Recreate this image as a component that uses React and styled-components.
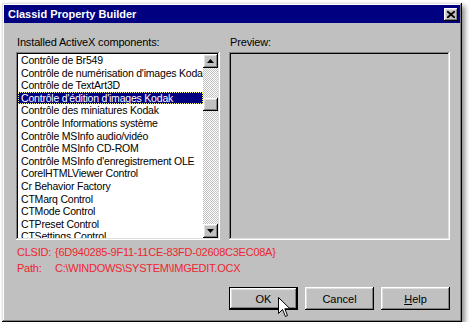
import React from 'react';
import styled, { createGlobalStyle } from 'styled-components';

const GlobalStyle = createGlobalStyle`
  body {
    margin: 0;
    background: #ffffff;
    font-family: "Liberation Sans", Arial, sans-serif;
    font-size: 11px;
  }
`;

const raised = `
  box-shadow: inset -1px -1px #000000, inset 1px 1px #ffffff,
    inset -2px -2px #808080, inset 2px 2px #dfdfdf;
`;
const sunken = `
  box-shadow: inset -1px -1px #ffffff, inset 1px 1px #808080,
    inset -2px -2px #dfdfdf, inset 2px 2px #000000;
`;

const Window = styled.div`
  position: relative;
  box-sizing: border-box;
  margin: 3px 0 0 2px;
  width: 460px;
  height: 319px;
  padding: 2px;
  background: #c0c0c0;
  display: flex;
  flex-direction: column;
  box-shadow: inset -1px -1px #000000, inset 1px 1px #dfdfdf,
    inset -2px -2px #808080, inset 2px 2px #ffffff,
    3px 3px 5px rgba(0, 0, 0, 0.45);
`;

const TitleBar = styled.div`
  height: 18px;
  background: #000080;
  color: #ffffff;
  display: flex;
  align-items: center;
  justify-content: space-between;
  padding: 0 2px 0 4px;
  font-weight: bold;
  font-size: 11px;
`;

const CloseButton = styled.div`
  width: 14px;
  height: 13px;
  background: #c0c0c0;
  ${raised}
  display: flex;
  align-items: center;
  justify-content: center;
`;

const Body = styled.div`
  flex: 1;
  padding: 13px 10px 0 12px;
  display: flex;
  flex-direction: column;
`;

const Panes = styled.div`
  display: grid;
  grid-template-columns: 204px 221px;
  grid-template-rows: 13px 188px;
  column-gap: 9px;
  row-gap: 3px;
`;

const Label = styled.div`
  line-height: 13px;
  color: #000000;
  padding-left: 1px;
  letter-spacing: -0.15px;
`;

const ListBox = styled.div`
  box-sizing: border-box;
  background: #ffffff;
  ${sunken}
  padding: 2px;
  display: flex;
  overflow: hidden;
`;

const Items = styled.div`
  flex: 1;
  overflow: hidden;
`;

const Item = styled.div`
  height: 12.6px;
  line-height: 12.6px;
  padding-left: 3px;
  font-size: 10.5px;
  letter-spacing: -0.2px;
  white-space: nowrap;
  overflow: hidden;
  color: ${(p) => (p.$selected ? '#ffffff' : '#000000')};
  background: ${(p) => (p.$selected ? '#000080' : 'transparent')};
  outline: ${(p) => (p.$selected ? '1px dotted #ffff80' : 'none')};
  outline-offset: -1px;
`;

const ScrollBar = styled.div`
  width: 15px;
  display: flex;
  flex-direction: column;
  background: repeating-conic-gradient(#c0c0c0 0 25%, #ffffff 0 50%) 0 0 / 2px 2px;
`;

const ScrollButton = styled.div`
  height: 14px;
  background: #c0c0c0;
  ${raised}
  display: flex;
  align-items: center;
  justify-content: center;
`;

const Thumb = styled.div`
  height: 13px;
  margin-top: 30px;
  background: #c0c0c0;
  ${raised}
`;

const Track = styled.div`
  flex: 1;
`;

const Preview = styled.div`
  background: #c0c0c0;
  ${sunken}
`;

const Info = styled.div`
  margin-top: 4px;
  color: #ee2630;
  display: grid;
  grid-template-columns: 38px 1fr;
  line-height: 16px;
  padding-left: 1px;
  letter-spacing: -0.25px;
`;

const Buttons = styled.div`
  margin-top: 11px;
  display: flex;
  justify-content: flex-end;
  gap: 7px;
`;

const Button = styled.div`
  position: relative;
  box-sizing: border-box;
  width: 69px;
  height: 23px;
  background: #c0c0c0;
  display: flex;
  align-items: center;
  justify-content: center;
  ${(p) =>
    p.$default
      ? `box-shadow: inset 0 0 0 1px #000000, inset -2px -2px #000000, inset 2px 2px #ffffff, inset -3px -3px #808080, inset 3px 3px #dfdfdf;`
      : raised}
`;

const Cursor = styled.svg`
  position: absolute;
  left: 276px;
  top: 294px;
`;

const items = [
  'Contrôle de Br549',
  "Contrôle de numérisation d'images Kodak",
  'Contrôle de TextArt3D',
  "Contrôle d'édition d'images Kodak",
  'Contrôle des miniatures Kodak',
  'Contrôle Informations système',
  'Contrôle MSInfo audio/vidéo',
  'Contrôle MSInfo CD-ROM',
  "Contrôle MSInfo d'enregistrement OLE",
  'CorelHTMLViewer Control',
  'Cr Behavior Factory',
  'CTMarq Control',
  'CTMode Control',
  'CTPreset Control',
  'CTSettings Control',
];

const Arrow = ({ up }) => (
  <svg width="7" height="4" viewBox="0 0 7 4">
    <path d={up ? 'M3.5 0 L7 4 L0 4 Z' : 'M0 0 L7 0 L3.5 4 Z'} fill="#000" />
  </svg>
);

export default function App() {
  return (
    <>
      <GlobalStyle />
      <Window>
        <TitleBar>
          <span>Classid Property Builder</span>
          <CloseButton>
            <svg width="8" height="7" viewBox="0 0 8 7">
              <path d="M0 0 L8 7 M8 0 L0 7" stroke="#000" strokeWidth="1.8" />
            </svg>
          </CloseButton>
        </TitleBar>
        <Body>
          <Panes>
            <Label>Installed ActiveX components:</Label>
            <Label>Preview:</Label>
            <ListBox>
              <Items>
                {items.map((t, i) => (
                  <Item key={t} $selected={i === 3}>{t}</Item>
                ))}
              </Items>
              <ScrollBar>
                <ScrollButton><Arrow up /></ScrollButton>
                <Thumb />
                <Track />
                <ScrollButton><Arrow /></ScrollButton>
              </ScrollBar>
            </ListBox>
            <Preview />
          </Panes>
          <Info>
            <span>CLSID:</span>
            <span>{'{6D940285-9F11-11CE-83FD-02608C3EC08A}'}</span>
            <span>Path:</span>
            <span>C:\WINDOWS\SYSTEM\IMGEDIT.OCX</span>
          </Info>
          <Buttons>
            <Button $default>OK</Button>
            <Button>Cancel</Button>
            <Button><span><u>H</u>elp</span></Button>
          </Buttons>
        </Body>
        <Cursor width="13" height="21" viewBox="0 0 13 21">
          <path d="M0.5 0.5 L0.5 16.5 L4.5 12.5 L7.5 19.5 L9.5 18.5 L6.8 11.8 L12 11.8 Z" fill="#fff" stroke="#000" strokeWidth="1" />
        </Cursor>
      </Window>
    </>
  );
}
